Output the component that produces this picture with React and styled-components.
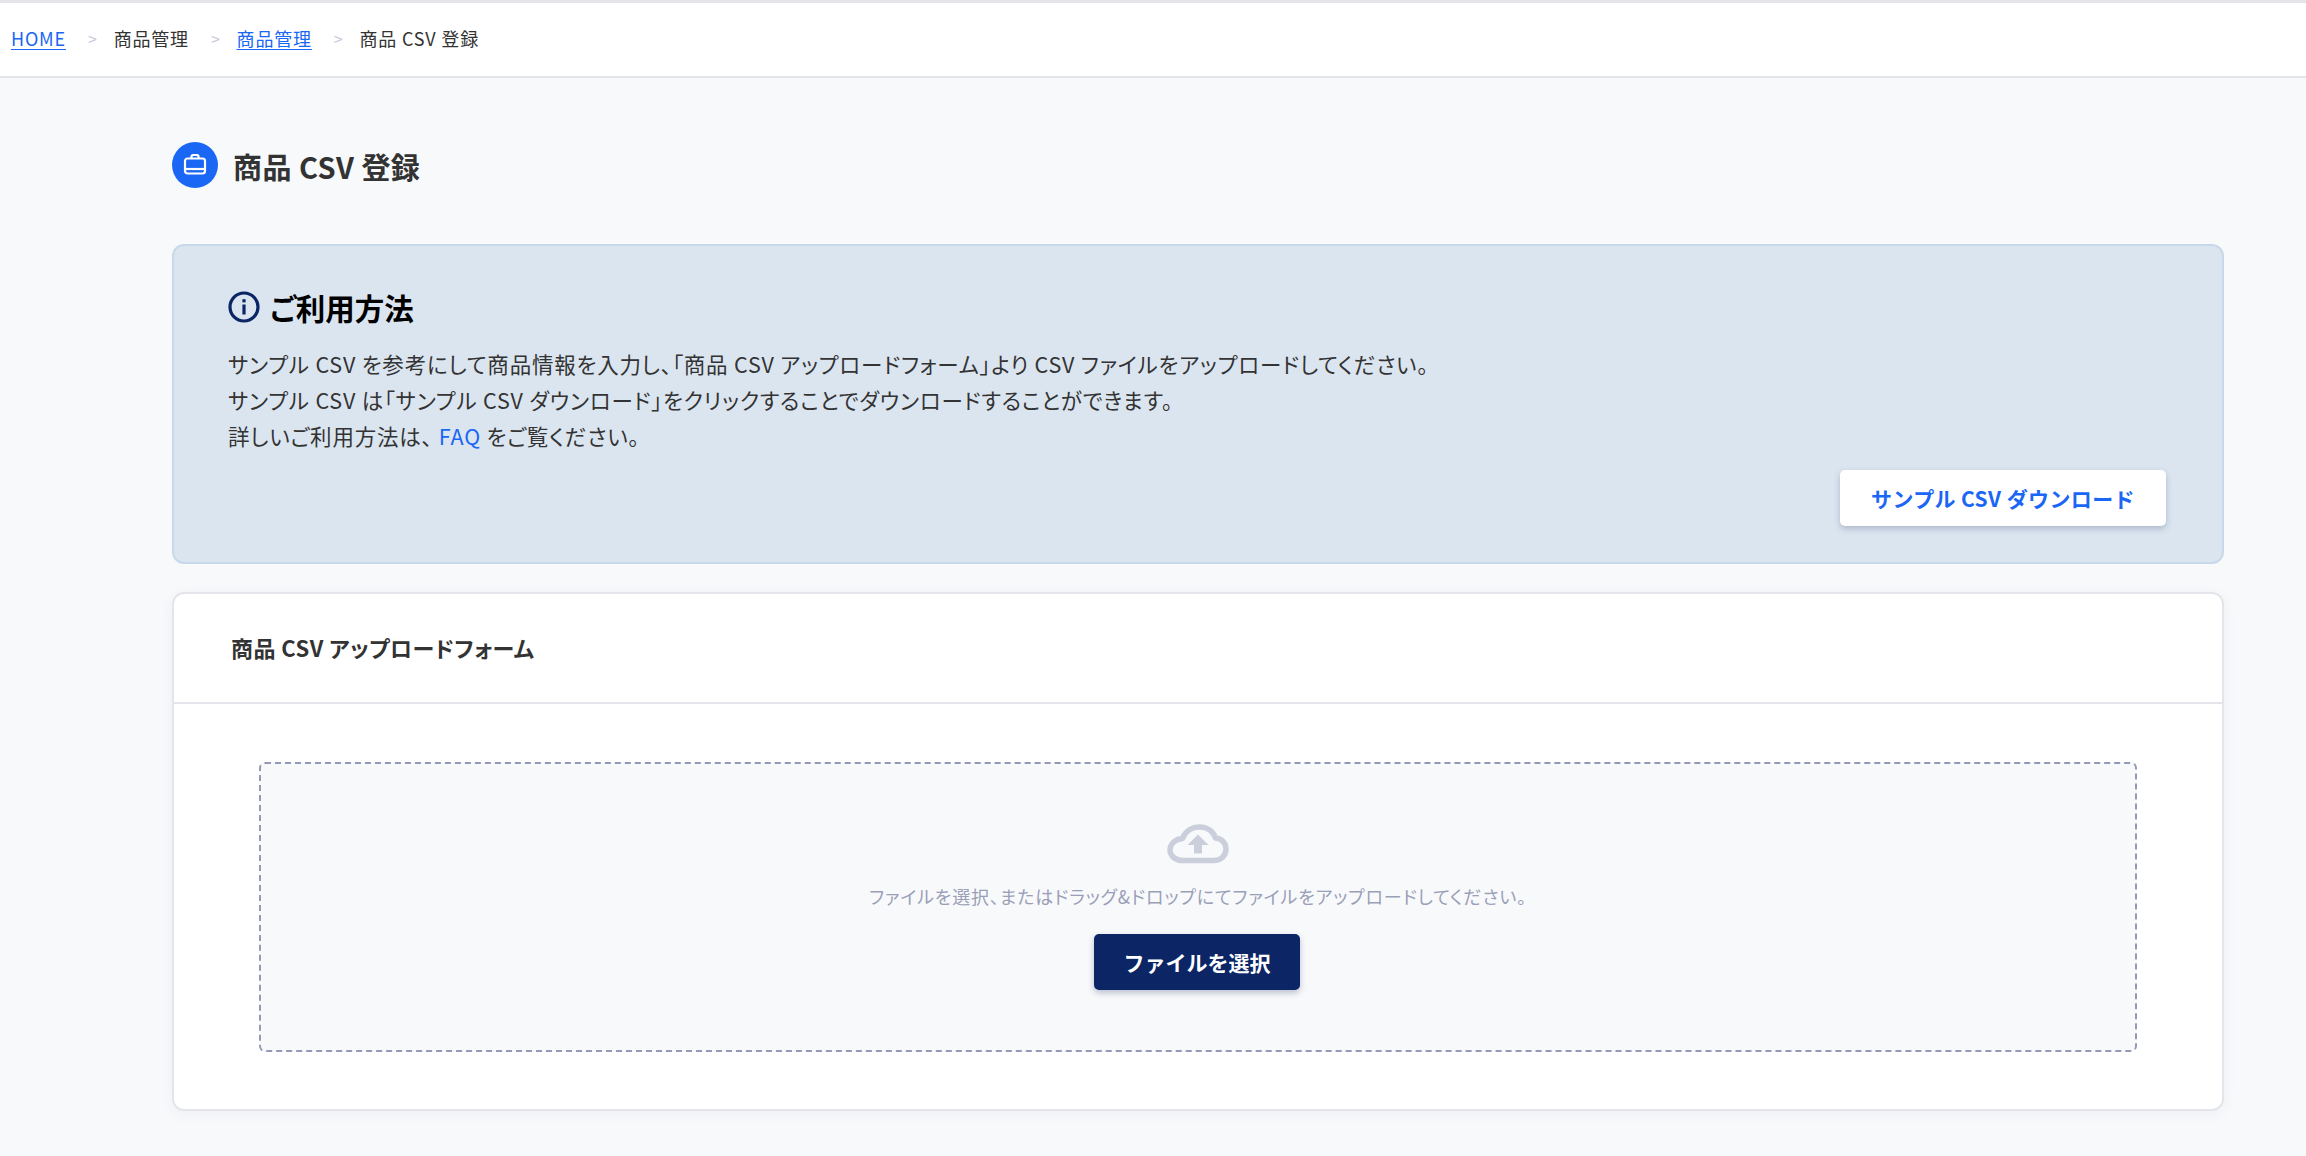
import React from "react";
import styled, { createGlobalStyle } from "styled-components";

const Global = createGlobalStyle`
  html, body { margin: 0; padding: 0; background: #f8f9fb; }
  body {
    font-family: "Noto Sans CJK JP", "Noto Sans", sans-serif;
    font-feature-settings: "palt";
    color: #333;
  }
  button { font-feature-settings: "palt"; }
  * { box-sizing: border-box; }
`;

const Page = styled.div`
  min-height: 1156px;
  background: #f8f9fb;
`;

const Breadcrumb = styled.nav`
  height: 78px;
  padding: 0 11px 4px;
  display: flex;
  align-items: center;
  gap: 19px;
  background: #fff;
  border-top: 3px solid #e4e5e9;
  border-bottom: 2px solid #e2e4ea;
  font-size: 18px;
  letter-spacing: 0.045em;
`;

const Crumb = styled.a`
  color: ${(p) => (p.$link ? "#1a66f5" : "#333")};
  text-decoration: ${(p) => (p.$link ? "underline" : "none")};
  text-underline-offset: 3px;
`;

const Sep = styled.span`
  margin: 0 -3px 0 3px;
  color: #c9ccd8;
  font-size: 16px;
`;

const Main = styled.main`
  padding: 64px 82px 0 172px;
`;

const TitleRow = styled.div`
  display: flex;
  align-items: center;
  gap: 15px;
  height: 46px;
  margin-bottom: 56px;
`;

const TitleBadge = styled.span`
  width: 46px;
  height: 46px;
  border-radius: 50%;
  background: #1a66f5;
  display: flex;
  align-items: center;
  justify-content: center;
`;

const Title = styled.h1`
  margin: 1px 0 0;
  font-size: 29px;
  font-weight: 700;
  letter-spacing: 0.015em;
  color: #333;
`;

const InfoCard = styled.section`
  height: 320px;
  padding: 41px 56px 0 54px;
  background: #dbe5f0;
  border: 2px solid #c8d8ea;
  border-radius: 12px;
  display: flex;
  flex-direction: column;
`;

const InfoHead = styled.div`
  display: flex;
  align-items: center;
  gap: 10px;
  height: 40px;
  margin-bottom: 19px;
`;

const InfoTitle = styled.h2`
  margin: 0;
  font-size: 29.5px;
  font-weight: 700;
  color: #000;
`;

const InfoText = styled.p`
  margin: 0;
  font-size: 21.5px;
  line-height: 36px;
  letter-spacing: 0.037em;
  color: #333;
`;

const InlineLink = styled.a`
  color: #1a66f5;
`;

const InfoActions = styled.div`
  display: flex;
  justify-content: flex-end;
  margin-top: 16px;
`;

const LightButton = styled.button`
  width: 326px;
  height: 56px;
  background: #fff;
  border: none;
  border-radius: 5px;
  font: 700 21px "Noto Sans CJK JP", sans-serif;
  letter-spacing: 0.018em;
  color: #1a66f5;
  box-shadow: 0 3px 6px rgba(40, 60, 100, 0.25);
`;

const UploadCard = styled.section`
  height: 519px;
  margin-top: 28px;
  background: #fff;
  border: 2px solid #e3e5ea;
  border-radius: 12px;
  box-shadow: 0 3px 14px rgba(40, 60, 100, 0.05);
`;

const UploadHead = styled.header`
  height: 110px;
  padding: 0 57px 3px;
  display: flex;
  align-items: center;
  border-bottom: 2px solid #e3e5ea;
  font-size: 22px;
  font-weight: 700;
  letter-spacing: 0.02em;
  color: #333;
`;

const UploadBody = styled.div`
  padding: 58px 85px 58px 85px;
`;

const DropZone = styled.div`
  height: 290px;
  background: #f8f9fb;
  border: 2px dashed #9499b7;
  border-radius: 6px;
  display: flex;
  flex-direction: column;
  align-items: center;
  padding-top: 60px;
`;

const DropHint = styled.p`
  margin: 19px 0 25px;
  font-size: 18px;
  line-height: 26px;
  letter-spacing: 0.047em;
  color: #9a9fb8;
`;

const DarkButton = styled.button`
  position: relative;
  left: -1px;
  width: 206px;
  height: 56px;
  background: #0b2565;
  border: none;
  border-radius: 5px;
  font: 700 21px "Noto Sans CJK JP", sans-serif;
  color: #fff;
  box-shadow: 0 3px 6px rgba(40, 60, 100, 0.3);
`;

const BriefcaseIcon = () => (
  <svg width="24" height="24" viewBox="0 0 24 24" fill="none" stroke="#fff" strokeWidth="2.2">
    <path d="M8.500 5.500V3.500C8.500 2.700 9.200 2 10 2h4c.8 0 1.500.7 1.500 1.500v2" />
    <rect x="2" y="5.500" width="20" height="15" rx="2.500" />
    <path d="M2 16h20" />
  </svg>
);

const InfoIcon = () => (
  <svg width="32" height="32" viewBox="0 0 32 32" fill="none">
    <circle cx="16" cy="16" r="14" stroke="#0b2565" strokeWidth="3.200" />
    <rect x="14.400" y="13.500" width="3.200" height="10" fill="#0b2565" />
    <rect x="14.400" y="8.200" width="3.200" height="3.200" fill="#0b2565" />
  </svg>
);

const CloudIcon = () => (
  <svg width="62" height="40" viewBox="0 0 62 40" fill="none">
    <path
      d="M16 36.500h31c7 0 12-5 12-11.500 0-6-4.500-10.500-10.500-11C46 7 40 3 32.500 3 24 3 18 8 15.500 14.500 8 15 3 20 3 26c0 6 5.500 10.500 13 10.500z"
      stroke="#cbcfdc"
      strokeWidth="5.500"
      strokeLinejoin="round"
    />
    <path d="M31 10.500 41.500 21H35v8.500h-8V21h-6.500z" fill="#cbcfdc" />
  </svg>
);

export default function App() {
  return (
    <Page>
      <Global />
      <Breadcrumb>
        <Crumb $link href="#">HOME</Crumb>
        <Sep>&gt;</Sep>
        <Crumb>商品管理</Crumb>
        <Sep>&gt;</Sep>
        <Crumb $link href="#">商品管理</Crumb>
        <Sep>&gt;</Sep>
        <Crumb>商品 CSV 登録</Crumb>
      </Breadcrumb>
      <Main>
        <TitleRow>
          <TitleBadge><BriefcaseIcon /></TitleBadge>
          <Title>商品 CSV 登録</Title>
        </TitleRow>
        <InfoCard>
          <InfoHead>
            <InfoIcon />
            <InfoTitle>ご利用方法</InfoTitle>
          </InfoHead>
          <InfoText>
            サンプル CSV を参考にして商品情報を入力し、「商品 CSV アップロードフォーム」より CSV ファイルをアップロードしてください。<br />
            サンプル CSV は「サンプル CSV ダウンロード」をクリックすることでダウンロードすることができます。<br />
            詳しいご利用方法は、 <InlineLink>FAQ</InlineLink> をご覧ください。
          </InfoText>
          <InfoActions>
            <LightButton>サンプル CSV ダウンロード</LightButton>
          </InfoActions>
        </InfoCard>
        <UploadCard>
          <UploadHead>商品 CSV アップロードフォーム</UploadHead>
          <UploadBody>
            <DropZone>
              <CloudIcon />
              <DropHint>ファイルを選択、またはドラッグ&ドロップにてファイルをアップロードしてください。</DropHint>
              <DarkButton>ファイルを選択</DarkButton>
            </DropZone>
          </UploadBody>
        </UploadCard>
      </Main>
    </Page>
  );
}
